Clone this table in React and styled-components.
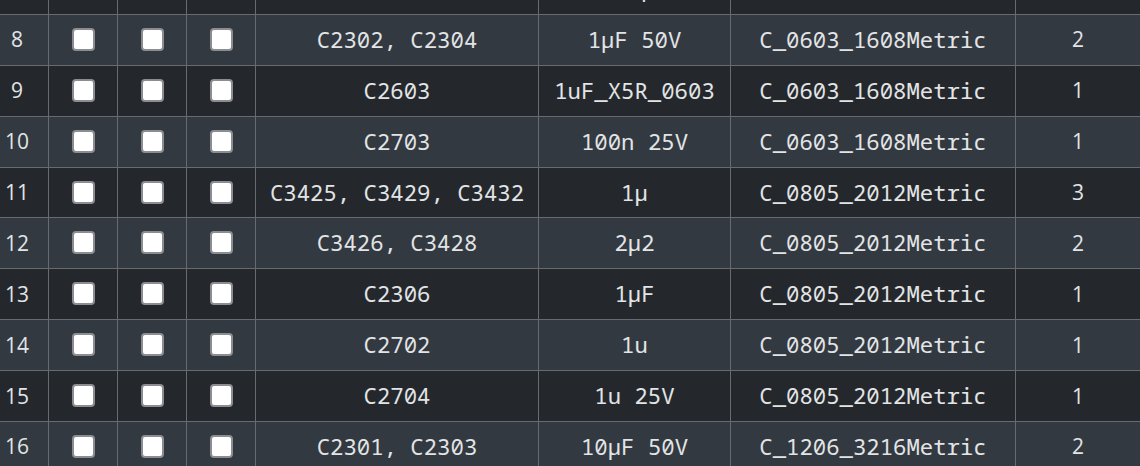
import React from "react";
import styled, { createGlobalStyle } from "styled-components";

const rows = [
  { n: 7, refs: "C2305", value: "100μF", fp: "C_0603_1608Metric", qty: 1 },
  { n: 8, refs: "C2302, C2304", value: "1μF 50V", fp: "C_0603_1608Metric", qty: 2 },
  { n: 9, refs: "C2603", value: "1uF_X5R_0603", fp: "C_0603_1608Metric", qty: 1 },
  { n: 10, refs: "C2703", value: "100n 25V", fp: "C_0603_1608Metric", qty: 1 },
  { n: 11, refs: "C3425, C3429, C3432", value: "1μ", fp: "C_0805_2012Metric", qty: 3 },
  { n: 12, refs: "C3426, C3428", value: "2μ2", fp: "C_0805_2012Metric", qty: 2 },
  { n: 13, refs: "C2306", value: "1μF", fp: "C_0805_2012Metric", qty: 1 },
  { n: 14, refs: "C2702", value: "1u", fp: "C_0805_2012Metric", qty: 1 },
  { n: 15, refs: "C2704", value: "1u 25V", fp: "C_0805_2012Metric", qty: 1 },
  { n: 16, refs: "C2301, C2303", value: "10μF 50V", fp: "C_1206_3216Metric", qty: 2 },
  { n: 17, refs: "C2401", value: "10μF", fp: "C_1206_3216Metric", qty: 1 },
];

const GlobalStyle = createGlobalStyle`
  html, body {
    margin: 0;
    padding: 0;
    background: #24282c;
  }
`;

const Viewport = styled.div`
  width: 1140px;
  height: 466px;
  overflow: hidden;
`;

// scrolled list: the offset stands in for the view's scroll position
const Table = styled.div`
  margin-top: ${(p) => -p.$scroll}px;
`;

const Row = styled.div`
  display: grid;
  grid-template-columns: 49px 69px 69px 69px 283px 192px 285px 1fr;
  height: 50.9px;
  border-bottom: 1px solid #676b6f;
  box-sizing: border-box;
  background: ${(p) => (p.$alt ? "#323940" : "#24282c")};
`;

const Cell = styled.div`
  display: flex;
  align-items: center;
  justify-content: center;
  border-right: 1px solid #676b6f;
  box-sizing: border-box;
  color: #e2e4e6;
  font-family: ${(p) =>
    p.$mono
      ? '"Noto Sans Mono", "DejaVu Sans Mono", monospace'
      : '"Open Sans", "Noto Sans", sans-serif'};
  font-size: ${(p) => (p.$mono ? "22.3px" : "21px")};
  padding-right: ${(p) => p.$padRight || 0}px;
  padding-bottom: 1px;
  white-space: pre;

  &:last-child {
    border-right: none;
  }
`;

const Check = styled.span`
  display: block;
  width: 23px;
  height: 23px;
  box-sizing: border-box;
  background: #ffffff;
  border: 2px solid #8c8d93;
  border-radius: 4px;
`;

export default function App() {
  return (
    <Viewport>
      <GlobalStyle />
      <Table $scroll={36}>
        {rows.map((r) => (
          <Row key={r.n} $alt={r.n % 2 === 0}>
            <Cell $padRight={14}>{r.n}</Cell>
            <Cell><Check /></Cell>
            <Cell><Check /></Cell>
            <Cell><Check /></Cell>
            <Cell $mono>{r.refs}</Cell>
            <Cell $mono>{r.value}</Cell>
            <Cell $mono>{r.fp}</Cell>
            <Cell>{r.qty}</Cell>
          </Row>
        ))}
      </Table>
    </Viewport>
  );
}
